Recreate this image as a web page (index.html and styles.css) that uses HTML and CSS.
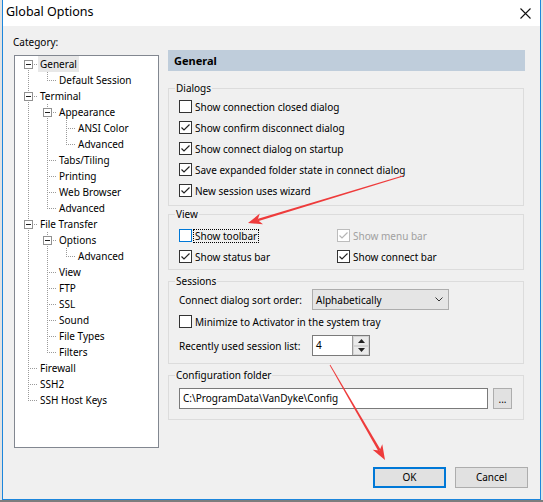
FILE: index.html
```html
<!DOCTYPE html>
<html>
<head>
<meta charset="utf-8">
<title>Global Options</title>
<link rel="stylesheet" href="styles.css">
</head>
<body>
<div class="dialog">
  <div class="titlebar">
    <span class="title">Global Options</span>
    <svg class="close" width="11" height="11" viewBox="0 0 11 11"><path d="M0.5 0.5L10.5 10.5M10.5 0.5L0.5 10.5" stroke="#111" stroke-width="1.1" fill="none"/></svg>
  </div>
  <div class="client">
    <div class="main">
      <div class="left">
        <div class="cat-label">Category:</div>
        <div class="tree">
          <div class="row"><i class="ln f"><b class="exp"></b></i><span class="lbl sel">General</span></div>
          <div class="row"><i class="ln v"></i><i class="ln l"></i><span class="lbl">Default Session</span></div>
          <div class="row"><i class="ln t"><b class="exp"></b></i><span class="lbl">Terminal</span></div>
          <div class="row"><i class="ln v"></i><i class="ln t"><b class="exp"></b></i><span class="lbl">Appearance</span></div>
          <div class="row"><i class="ln v"></i><i class="ln v"></i><i class="ln t"></i><span class="lbl">ANSI Color</span></div>
          <div class="row"><i class="ln v"></i><i class="ln v"></i><i class="ln l"></i><span class="lbl">Advanced</span></div>
          <div class="row"><i class="ln v"></i><i class="ln t"></i><span class="lbl">Tabs/Tiling</span></div>
          <div class="row"><i class="ln v"></i><i class="ln t"></i><span class="lbl">Printing</span></div>
          <div class="row"><i class="ln v"></i><i class="ln t"></i><span class="lbl">Web Browser</span></div>
          <div class="row"><i class="ln v"></i><i class="ln l"></i><span class="lbl">Advanced</span></div>
          <div class="row"><i class="ln t"><b class="exp"></b></i><span class="lbl">File Transfer</span></div>
          <div class="row"><i class="ln v"></i><i class="ln t"><b class="exp"></b></i><span class="lbl">Options</span></div>
          <div class="row"><i class="ln v"></i><i class="ln v"></i><i class="ln l"></i><span class="lbl">Advanced</span></div>
          <div class="row"><i class="ln v"></i><i class="ln t"></i><span class="lbl">View</span></div>
          <div class="row"><i class="ln v"></i><i class="ln t"></i><span class="lbl">FTP</span></div>
          <div class="row"><i class="ln v"></i><i class="ln t"></i><span class="lbl">SSL</span></div>
          <div class="row"><i class="ln v"></i><i class="ln t"></i><span class="lbl">Sound</span></div>
          <div class="row"><i class="ln v"></i><i class="ln t"></i><span class="lbl">File Types</span></div>
          <div class="row"><i class="ln v"></i><i class="ln l"></i><span class="lbl">Filters</span></div>
          <div class="row"><i class="ln t"></i><span class="lbl">Firewall</span></div>
          <div class="row"><i class="ln t"></i><span class="lbl">SSH2</span></div>
          <div class="row"><i class="ln l"></i><span class="lbl">SSH Host Keys</span></div>
        </div>
      </div>
      <div class="right">
        <div class="header">General</div>

        <fieldset class="grp g-dialogs">
          <legend>Dialogs</legend>
          <div class="grp-body">
            <div class="cb"><span class="box"></span><span class="txt">Show connection closed dialog</span></div>
            <div class="cb"><span class="box"><svg width="11" height="11" viewBox="0 0 11 11"><polyline points="1.5,5.5 4,8 9.5,2.5" /></svg></span><span class="txt">Show confirm disconnect dialog</span></div>
            <div class="cb"><span class="box"><svg width="11" height="11" viewBox="0 0 11 11"><polyline points="1.5,5.5 4,8 9.5,2.5" /></svg></span><span class="txt">Show connect dialog on startup</span></div>
            <div class="cb"><span class="box"><svg width="11" height="11" viewBox="0 0 11 11"><polyline points="1.5,5.5 4,8 9.5,2.5" /></svg></span><span class="txt">Save expanded folder state in connect dialog</span></div>
            <div class="cb"><span class="box"><svg width="11" height="11" viewBox="0 0 11 11"><polyline points="1.5,5.5 4,8 9.5,2.5" /></svg></span><span class="txt">New session uses wizard</span></div>
          </div>
        </fieldset>

        <fieldset class="grp g-view">
          <legend>View</legend>
          <div class="grp-body grid2">
            <div class="cb"><span class="box focus"></span><span class="txt focus-rect">Show toolbar</span></div>
            <div class="cb"><span class="box dis"><svg width="11" height="11" viewBox="0 0 11 11"><polyline points="1.5,5.5 4,8 9.5,2.5" /></svg></span><span class="txt dis-txt">Show menu bar</span></div>
            <div class="cb"><span class="box"><svg width="11" height="11" viewBox="0 0 11 11"><polyline points="1.5,5.5 4,8 9.5,2.5" /></svg></span><span class="txt">Show status bar</span></div>
            <div class="cb"><span class="box"><svg width="11" height="11" viewBox="0 0 11 11"><polyline points="1.5,5.5 4,8 9.5,2.5" /></svg></span><span class="txt">Show connect bar</span></div>
          </div>
        </fieldset>

        <fieldset class="grp g-sessions">
          <legend>Sessions</legend>
          <div class="grp-body">
            <div class="srow">
              <span class="slabel">Connect dialog sort order:</span>
              <div class="combo"><span>Alphabetically</span><svg width="8" height="5" viewBox="0 0 8 5"><polyline points="0.5,0.5 4,4 7.5,0.5" fill="none" stroke="#333" stroke-width="1"/></svg></div>
            </div>
            <div class="cb srow2"><span class="box"></span><span class="txt">Minimize to Activator in the system tray</span></div>
            <div class="srow srow3">
              <span class="slabel">Recently used session list:</span>
              <div class="spin">
                <span class="spin-val">4</span>
                <div class="spin-btns">
                  <span class="sb"><svg width="7" height="4" viewBox="0 0 7 4"><polygon points="3.5,0 7,4 0,4" fill="#222"/></svg></span>
                  <span class="sb"><svg width="7" height="4" viewBox="0 0 7 4"><polygon points="0,0 7,0 3.5,4" fill="#222"/></svg></span>
                </div>
              </div>
            </div>
          </div>
        </fieldset>

        <fieldset class="grp g-config">
          <legend>Configuration folder</legend>
          <div class="grp-body frow">
            <div class="tbox">C:\ProgramData\VanDyke\Config</div>
            <div class="ell">...</div>
          </div>
        </fieldset>
      </div>
    </div>
    <div class="buttons">
      <div class="btn default">OK</div>
      <div class="btn">Cancel</div>
    </div>
  </div>
</div>
<svg class="annot" width="543" height="502" viewBox="0 0 543 502">
  <polygon points="257.25,218.95 402.9,175.6 403.1,176.4 257.95,221.25" fill="#ee3b3b"/>
  <polygon points="248,223 259.8,213.6 257.6,220.1 263,224.2" fill="#ee3b3b"/>
  <polygon points="378.4,451.15 329.65,365.2 330.35,364.8 380.6,449.85" fill="#ee3b3b"/>
  <polygon points="385,460 372.7,449.8 379.5,450.5 382.3,444.2" fill="#ee3b3b"/>
</svg>
</body>
</html>
```

FILE: styles.css
```css
* { box-sizing: border-box; }
html, body { margin: 0; padding: 0; }
body {
  width: 543px;
  height: 502px;
  overflow: hidden;
  position: relative;
  background: linear-gradient(#e2e2e2 0 500px, #7d7d7d 500px);
  font-family: "Noto Sans", "DejaVu Sans", sans-serif;
  font-size: 10px;
  color: #000;
}
.dialog {
  margin-left: 2px;
  width: 539px;
  height: 500px;
  border: 1px solid #1c86dc;
  border-top: 0;
  background: #f0f0f0;
  display: flex;
  flex-direction: column;
}
.titlebar {
  flex: none;
  height: 26px;
  background: #fff;
  display: flex;
  align-items: flex-start;
  justify-content: space-between;
  padding-left: 3px;
}
.title { font-size: 12.5px; line-height: 24px; }
.close { margin-top: 8px; margin-right: 9px; }

.client { flex: 1; display: flex; flex-direction: column; }
.main { display: flex; padding-left: 10px; }
.left { width: 146px; padding-top: 9px; flex: none; }
.cat-label { line-height: 14px; }
.tree {
  margin-left: 1px;
  margin-top: 6px;
  width: 145px;
  height: 393px;
  background: #fff;
  border: 1px solid #828790;
  padding-left: 4px;
}
.row { display: flex; height: 16px; }
.ln {
  flex: none;
  width: 19px;
  height: 16px;
  display: flex;
  align-items: center;
  justify-content: center;
  background-repeat: no-repeat;
}
.ln.v {
  background-image: repeating-linear-gradient(to bottom, #9a9a9a 0 1px, transparent 1px 2px);
  background-size: 1px 16px;
  background-position: 9px 0;
}
.ln.t {
  background-image: repeating-linear-gradient(to bottom, #9a9a9a 0 1px, transparent 1px 2px),
                    repeating-linear-gradient(to right, #9a9a9a 0 1px, transparent 1px 2px);
  background-size: 1px 16px, 10px 1px;
  background-position: 9px 0, 9px 8px;
}
.ln.l {
  background-image: repeating-linear-gradient(to bottom, #9a9a9a 0 1px, transparent 1px 2px),
                    repeating-linear-gradient(to right, #9a9a9a 0 1px, transparent 1px 2px);
  background-size: 1px 8px, 10px 1px;
  background-position: 9px 0, 9px 8px;
}
.ln.f {
  background-image: repeating-linear-gradient(to bottom, #9a9a9a 0 1px, transparent 1px 2px),
                    repeating-linear-gradient(to right, #9a9a9a 0 1px, transparent 1px 2px);
  background-size: 1px 8px, 10px 1px;
  background-position: 9px 8px, 9px 8px;
}
.exp {
  width: 9px;
  height: 9px;
  border: 1px solid #919191;
  background: #fff;
  display: flex;
  align-items: center;
  justify-content: center;
}
.exp::before { content: ""; width: 5px; height: 1px; background: #1f1f1f; }
.lbl { padding: 0 2px; line-height: 16px; white-space: nowrap; }
.lbl.sel { background: #e8e8e8; }

.right { margin-left: 9px; width: 357px; padding-top: 24px; flex: none; }
.header {
  height: 21px;
  background: #bfcddb;
  font-weight: 700;
  font-size: 11px;
  line-height: 21px;
  padding-left: 6px;
}
.grp {
  margin: 0;
  padding: 0;
  min-width: 0;
  width: 356px;
  border: 1px solid #dcdcdc;
}
.grp legend {
  margin-left: 6px;
  padding: 0 1px;
  font-size: 10px;
  line-height: 14px;
}
.grp-body { padding-left: 10px; }
.g-dialogs { margin-top: 10px; }
.g-dialogs .grp-body { padding-top: 1px; padding-bottom: 4px; }
.g-view { margin-top: 1px; }
.g-view .grp-body { padding-top: 4px; padding-bottom: 2px; }
.g-sessions { margin-top: 4px; }
.g-sessions .grp-body { padding-top: 1px; padding-bottom: 7px; }
.g-config { margin-top: 4px; }
.g-config .grp-body { padding-top: 6px; padding-bottom: 10px; }

.cb { display: flex; align-items: center; height: 21px; }
.box {
  flex: none;
  width: 13px;
  height: 13px;
  border: 1px solid #333;
  background: #fff;
  margin-right: 1px;
  display: flex;
}
.box polyline { fill: none; stroke: #222; stroke-width: 1.2; }
.box.focus { border-color: #0078d7; }
.box.dis { border-color: #bcbcbc; }
.box.dis polyline { stroke: #b5b5b5; }
.txt {
  padding: 0 1px;
  border: 1px solid transparent;
  line-height: 12px;
  white-space: nowrap;
}
.txt.focus-rect { border: 1px dotted #000; }
.txt.dis-txt { color: #a0a0a0; }
.grid2 { display: grid; grid-template-columns: 158px 1fr; }

.srow { display: flex; align-items: center; height: 21px; }
.srow2 { margin-top: 1px; }
.srow3 { margin-top: 3px; }
.slabel { width: 133px; flex: none; white-space: nowrap; }
.combo {
  width: 137px;
  height: 21px;
  background: #e5e5e5;
  border: 1px solid #adadad;
  display: flex;
  align-items: center;
  justify-content: space-between;
  padding: 0 5px 0 3px;
}
.spin {
  width: 58px;
  height: 21px;
  border: 1px solid #7a7a7a;
  background: #fff;
  display: flex;
}
.spin-val { flex: 1; padding-left: 3px; line-height: 19px; }
.spin-btns {
  width: 17px;
  display: flex;
  flex-direction: column;
  border-left: 1px solid #9a9a9a;
}
.sb {
  flex: 1;
  display: flex;
  align-items: center;
  justify-content: center;
  background: #eaeaea;
  border: 1px solid #d4d4d4;
}
.frow { display: flex; align-items: center; }
.tbox {
  width: 309px;
  height: 21px;
  border: 1px solid #7a7a7a;
  background: #fff;
  padding-left: 3px;
  line-height: 19px;
  white-space: nowrap;
}
.ell {
  width: 19px;
  height: 21px;
  margin-left: 5px;
  border: 1px solid #adadad;
  background: #e1e1e1;
  text-align: center;
  line-height: 21px;
}

.buttons {
  display: flex;
  justify-content: flex-end;
  gap: 9px;
  margin-top: 19px;
  padding-right: 12px;
}
.btn {
  width: 73px;
  height: 21px;
  background: #e1e1e1;
  border: 1px solid #adadad;
  text-align: center;
  line-height: 19px;
}
.btn.default { border: 2px solid #0078d7; line-height: 17px; }

.annot { position: absolute; left: 0; top: 0; pointer-events: none; }
```
